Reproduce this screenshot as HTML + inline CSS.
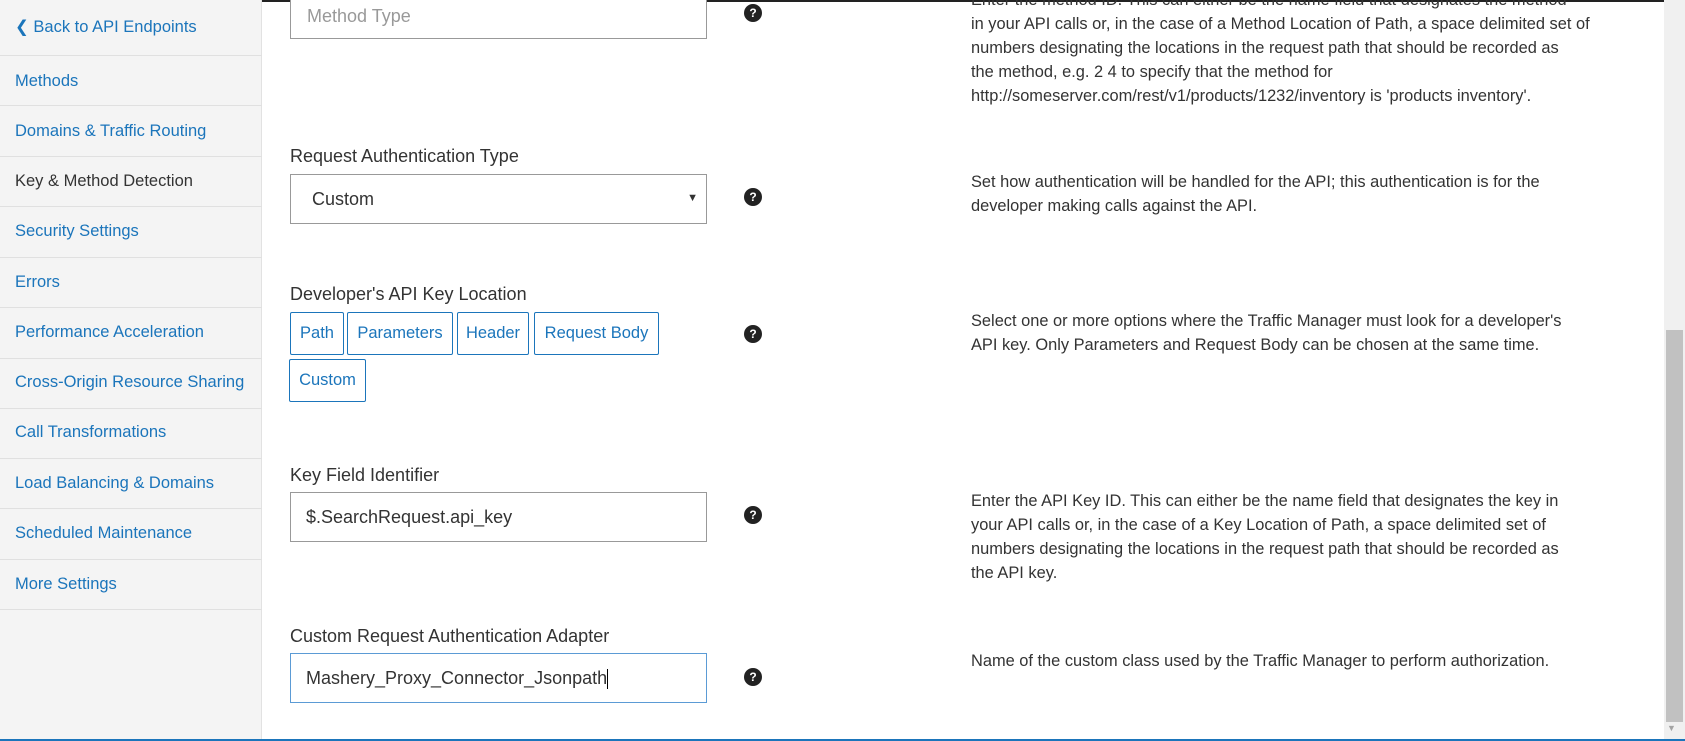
<!DOCTYPE html>
<html><head><meta charset="utf-8"><style>
*{margin:0;padding:0;box-sizing:border-box}
body{width:1685px;height:741px;overflow:hidden;background:#fff;font-family:"Liberation Sans",sans-serif;position:relative}
.a{position:absolute;white-space:nowrap}
#sb{position:absolute;left:0;top:0;width:262px;height:741px;background:#f4f4f4;border-right:1px solid #e2e2e2}
.si{position:absolute;left:15px;font-size:16.5px;color:#1b75bb}
.dv{position:absolute;left:0;width:262px;height:1px;background:#e0e0e0}
.lbl{position:absolute;left:290px;font-size:18px;color:#333}
.in{position:absolute;left:290px;width:417px;border:1px solid #999;background:#fff;font-size:18px;color:#333}
.btn{position:absolute;border:1px solid #1b75bb;border-radius:2px;color:#1b75bb;font-size:16.5px;text-align:center}
.q{position:absolute;left:744px;width:18px;height:18px;border-radius:50%;background:#222;color:#fff;font-size:12px;font-weight:bold;text-align:center;line-height:18px}
.d{position:absolute;left:971px;font-size:16.4px;color:#333;line-height:24px;white-space:nowrap}
</style></head><body>
<div style="position:absolute;left:0;top:0;width:1666px;height:2px;background:#222"></div>
<div id="sb">
<div class="si" style="top:17px">&#10094; Back to API Endpoints</div>
<div class="dv" style="top:55px"></div>
<div class="si" style="top:72px">Methods</div>
<div class="dv" style="top:105px"></div>
<div class="si" style="top:122px">Domains &amp; Traffic Routing</div>
<div class="dv" style="top:156px"></div>
<div class="si" style="top:172px;color:#333">Key &amp; Method Detection</div>
<div class="dv" style="top:206px"></div>
<div class="si" style="top:222px">Security Settings</div>
<div class="dv" style="top:257px"></div>
<div class="si" style="top:273px">Errors</div>
<div class="dv" style="top:307px"></div>
<div class="si" style="top:323px">Performance Acceleration</div>
<div class="dv" style="top:358px"></div>
<div class="si" style="top:373px">Cross-Origin Resource Sharing</div>
<div class="dv" style="top:408px"></div>
<div class="si" style="top:423px">Call Transformations</div>
<div class="dv" style="top:458px"></div>
<div class="si" style="top:474px">Load Balancing &amp; Domains</div>
<div class="dv" style="top:508px"></div>
<div class="si" style="top:524px">Scheduled Maintenance</div>
<div class="dv" style="top:559px"></div>
<div class="si" style="top:575px">More Settings</div>
<div class="dv" style="top:609px"></div>
</div>

<div class="in" style="top:-2px;height:41px;padding:7px 16px;color:#999">Method Type</div>
<div class="q" style="top:4px">?</div>
<div class="d" style="top:-12px">Enter the method ID. This can either be the name field that designates the method<br>in your API calls or, in the case of a Method Location of Path, a space delimited set of<br>numbers designating the locations in the request path that should be recorded as<br>the method, e.g. 2 4 to specify that the method for<br>http://someserver.com/rest/v1/products/1232/inventory is 'products inventory'.</div>

<div class="lbl" style="top:146px">Request Authentication Type</div>
<div class="in" style="top:174px;height:50px;padding:14px 21px">Custom<span style="position:absolute;right:8px;top:17px;font-size:11px">&#9660;</span></div>
<div class="q" style="top:188px">?</div>
<div class="d" style="top:170px">Set how authentication will be handled for the API; this authentication is for the<br>developer making calls against the API.</div>

<div class="lbl" style="top:284px">Developer's API Key Location</div>
<div class="btn" style="left:290px;top:312px;width:54px;height:43px;line-height:41px">Path</div>
<div class="btn" style="left:347px;top:312px;width:106px;height:43px;line-height:41px">Parameters</div>
<div class="btn" style="left:457px;top:312px;width:72px;height:43px;line-height:41px">Header</div>
<div class="btn" style="left:534px;top:312px;width:125px;height:43px;line-height:41px">Request Body</div>
<div class="btn" style="left:289px;top:359px;width:77px;height:43px;line-height:41px">Custom</div>
<div class="q" style="top:325px">?</div>
<div class="d" style="top:309px">Select one or more options where the Traffic Manager must look for a developer's<br>API key. Only Parameters and Request Body can be chosen at the same time.</div>

<div class="lbl" style="top:465px">Key Field Identifier</div>
<div class="in" style="top:492px;height:50px;padding:14px 15px">$.SearchRequest.api_key</div>
<div class="q" style="top:506px">?</div>
<div class="d" style="top:489px">Enter the API Key ID. This can either be the name field that designates the key in<br>your API calls or, in the case of a Key Location of Path, a space delimited set of<br>numbers designating the locations in the request path that should be recorded as<br>the API key.</div>

<div class="lbl" style="top:626px">Custom Request Authentication Adapter</div>
<div class="in" style="top:653px;height:50px;padding:14px 15px;border-color:#5b9bd5">Mashery_Proxy_Connector_Jsonpath<span style="display:inline-block;width:1px;height:20px;background:#000;vertical-align:middle"></span></div>
<div class="q" style="top:668px">?</div>
<div class="d" style="top:649px">Name of the custom class used by the Traffic Manager to perform authorization.</div>

<div style="position:absolute;left:1664px;top:0;width:21px;height:739px;background:#f0f0f0"></div>
<div style="position:absolute;left:1666px;top:330px;width:17px;height:392px;background:#c1c1c1"></div>
<div class="a" style="left:1667px;top:723px;font-size:9px;color:#a3a3a3">&#9660;</div>
<div style="position:absolute;left:0;top:739px;width:1685px;height:2px;background:#1b75bb"></div>
</body></html>
